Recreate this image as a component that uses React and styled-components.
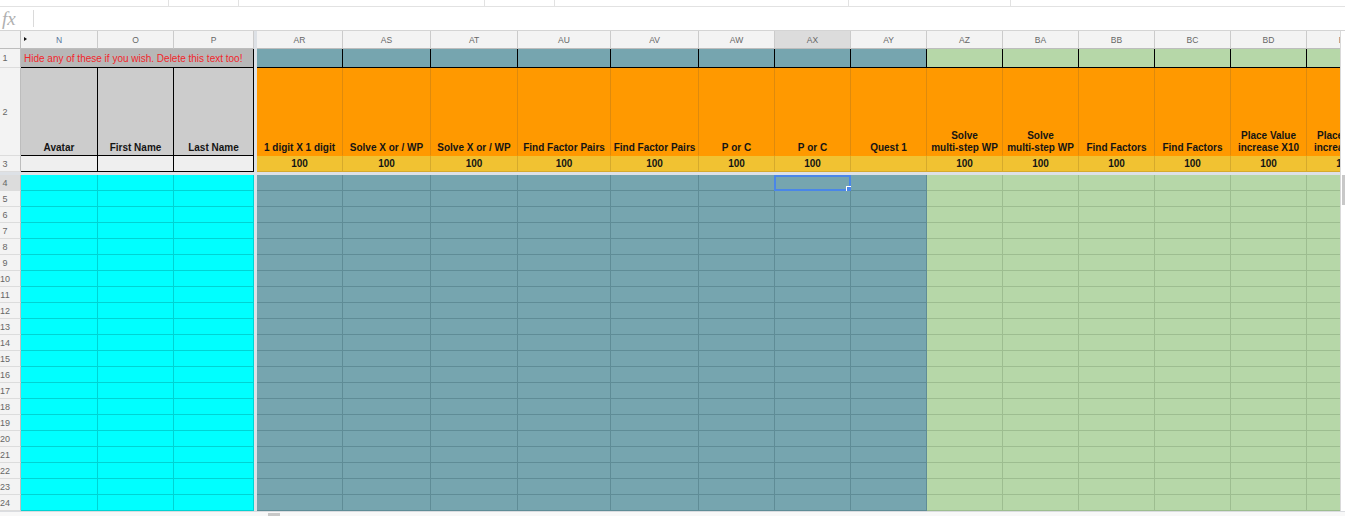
import React from "react";
import styled, { createGlobalStyle } from "styled-components";

const GlobalStyle = createGlobalStyle`
  *, *::before, *::after { box-sizing: border-box; }
  html, body { margin: 0; padding: 0; background: #ffffff; }
  body { font-family: "Liberation Sans", Arial, sans-serif; }
`;

const tones = {
  cyan: { bg: "#00ffff", line: "#00d3d3" },
  teal: { bg: "#76a5af", line: "#5f8c96" },
  green: { bg: "#b6d7a8", line: "#9dbd90" },
};

const leftCols = [
  { col: "N", w: 77, title: "Avatar" },
  { col: "O", w: 76, title: "First Name" },
  { col: "P", w: 80, title: "Last Name" },
];

const topics = [
  { col: "AR", w: 86, tone: "teal", title: ["1 digit X 1 digit"], score: "100" },
  { col: "AS", w: 88, tone: "teal", title: ["Solve X or / WP"], score: "100" },
  { col: "AT", w: 87, tone: "teal", title: ["Solve X or / WP"], score: "100" },
  { col: "AU", w: 93, tone: "teal", title: ["Find Factor Pairs"], score: "100" },
  { col: "AV", w: 88, tone: "teal", title: ["Find Factor Pairs"], score: "100" },
  { col: "AW", w: 76, tone: "teal", title: ["P or C"], score: "100" },
  { col: "AX", w: 76, tone: "teal", title: ["P or C"], score: "100" },
  { col: "AY", w: 76, tone: "teal", title: ["Quest 1"], score: "" },
  { col: "AZ", w: 76, tone: "green", title: ["Solve", "multi-step WP"], score: "100" },
  { col: "BA", w: 76, tone: "green", title: ["Solve", "multi-step WP"], score: "100" },
  { col: "BB", w: 76, tone: "green", title: ["Find Factors"], score: "100" },
  { col: "BC", w: 76, tone: "green", title: ["Find Factors"], score: "100" },
  { col: "BD", w: 76, tone: "green", title: ["Place Value", "increase X10"], score: "100" },
  { col: "BE", w: 76, tone: "green", title: ["Place Value", "increase X10"], score: "100" },
];

const activeCol = "AX";
const activeRow = 4;

const Page = styled.div`
  width: 1345px;
  height: 516px;
  overflow: hidden;
  display: flex;
  flex-direction: column;
`;

const Toolbar = styled.div`
  height: 7px;
  flex-shrink: 0;
  display: flex;
  border-bottom: 1px solid #e2e2e2;
`;

const ToolGroup = styled.div`
  width: ${(p) => p.$w}px;
  flex-shrink: 0;
  border-right: 1px solid #e2e2e2;
`;

const FormulaBar = styled.div`
  height: 24px;
  flex-shrink: 0;
  display: flex;
  align-items: center;
  border-bottom: 1px solid #d4d4d4;
`;

const Fx = styled.span`
  width: 33px;
  padding-left: 2px;
  font-family: "Liberation Serif", "Times New Roman", serif;
  font-style: italic;
  font-size: 19px;
  color: #b0b0b0;
  line-height: 1;
`;

const FormulaDivider = styled.div`
  width: 1px;
  height: 17px;
  background: #dadada;
`;

const Main = styled.div`
  flex: 1;
  display: flex;
  min-height: 0;
`;

const SheetView = styled.div`
  flex: 1;
  min-width: 0;
  overflow: hidden;
`;

const Grid = styled.div`
  display: grid;
  grid-template-columns: ${(p) => p.$cols};
  grid-template-rows: 18px 19px 88px 16px 3px repeat(21, 16px);
`;

const Corner = styled.div`
  background: #f3f3f3;
  border-right: 1px solid #bdbdbd;
  border-bottom: 1px solid #bdbdbd;
`;

const ColHead = styled.div`
  position: relative;
  display: flex;
  align-items: center;
  justify-content: center;
  background: ${(p) => (p.$active ? "#dcdcdc" : "#f3f3f3")};
  border-right: 1px solid #cbcbcb;
  border-bottom: 1px solid #bdbdbd;
  font-size: 8.5px;
  color: ${(p) => (p.$hint ? "#55739b" : "#666666")};
  white-space: nowrap;
`;

const HiddenMark = styled.span`
  position: absolute;
  left: 3px;
  top: 6px;
  width: 0;
  height: 0;
  border-top: 2.5px solid transparent;
  border-bottom: 2.5px solid transparent;
  border-left: 3px solid #111111;
`;

const RowHead = styled.div`
  display: flex;
  align-items: center;
  background: ${(p) => (p.$active ? "#dcdcdc" : "#f3f3f3")};
  border-right: 1px solid #bdbdbd;
  border-bottom: 1px solid #dcdcdc;
  font-size: 9px;
  color: #666666;
`;

const RowNum = styled.span`
  width: 10px;
  text-align: center;
  white-space: nowrap;
`;

const FreezeCol = styled.div`
  background: #dde1e6;
`;

const FreezeRow = styled.div`
  grid-column: 1 / -1;
  background: #dde1e6;
`;

const NoteCell = styled.div`
  grid-column: span 3;
  display: flex;
  align-items: center;
  padding-left: 3px;
  background: #b7b7b7;
  border-right: 1px solid #000000;
  border-bottom: 1px solid #000000;
  color: #f2262b;
  font-size: 10px;
  white-space: nowrap;
  overflow: hidden;
`;

const BandCell = styled.div`
  background: ${(p) => tones[p.$tone].bg};
  border-right: 1px solid #000000;
  border-bottom: 1px solid #000000;
`;

const TitleCell = styled.div`
  display: flex;
  flex-direction: column;
  justify-content: flex-end;
  align-items: center;
  padding-bottom: 1px;
  background: ${(p) => (p.$topic ? "#ff9900" : "#cccccc")};
  border-right: 1px solid ${(p) => (p.$topic ? "#de8a0c" : "#000000")};
  border-bottom: 1px solid ${(p) => (p.$topic ? "#ff9900" : "#000000")};
  font-size: 10px;
  font-weight: bold;
  line-height: 12px;
  color: #141414;
  text-align: center;
  white-space: nowrap;
`;

const ScoreCell = styled.div`
  display: flex;
  align-items: center;
  justify-content: center;
  background: ${(p) => (p.$topic ? "#f1c232" : "#efefef")};
  border-right: 1px solid ${(p) => (p.$topic ? "#d6aa2c" : "#000000")};
  border-bottom: 1px solid ${(p) => (p.$topic ? "#d6aa2c" : "#000000")};
  font-size: 10px;
  font-weight: bold;
  color: #141414;
`;

const DataCell = styled.div`
  position: relative;
  background: ${(p) => tones[p.$tone].bg};
  border-right: 1px solid ${(p) => tones[p.$tone].line};
  border-bottom: 1px solid ${(p) => tones[p.$tone].line};
`;

const Selection = styled.span`
  position: absolute;
  top: 0;
  left: -1px;
  right: -1px;
  bottom: -1px;
  border: 2px solid #4a86e8;
`;

const Handle = styled.span`
  position: absolute;
  right: -4px;
  bottom: -4px;
  width: 7px;
  height: 7px;
  background: #4a86e8;
  border-top: 1px solid #ffffff;
  border-left: 1px solid #ffffff;
`;

const VScroll = styled.div`
  width: 5px;
  flex-shrink: 0;
  padding-top: 144px;
  border-left: 1px solid #d9d9d9;
  background: #ffffff;
`;

const VThumb = styled.div`
  height: 30px;
  margin-left: 1px;
  background: #c8c8c8;
`;

const HScroll = styled.div`
  height: 5px;
  flex-shrink: 0;
  padding-top: 1px;
  border-top: 1px solid #dadce0;
  background: #f8f8f8;
`;

const HThumb = styled.div`
  width: 12px;
  height: 3px;
  margin-left: 268px;
  background: #c8c8c8;
`;

function App() {
  const rowNums = Array.from({ length: 21 }, (_, i) => i + 4);
  const cols = [21, ...leftCols.map((c) => c.w), 3, ...topics.map((t) => t.w)]
    .map((w) => `${w}px`)
    .join(" ");

  return (
    <Page>
      <GlobalStyle />
      <Toolbar>
        {[169, 70, 246, 70, 294, 162].map((w, i) => (
          <ToolGroup key={i} $w={w} />
        ))}
      </Toolbar>
      <FormulaBar>
        <Fx>fx</Fx>
        <FormulaDivider />
      </FormulaBar>
      <Main>
        <SheetView>
          <Grid $cols={cols}>
            <Corner />
            {leftCols.map((c, i) => (
              <ColHead key={c.col} $hint={i === 0}>
                {i === 0 && <HiddenMark />}
                {c.col}
              </ColHead>
            ))}
            <FreezeCol />
            {topics.map((t) => (
              <ColHead key={t.col} $active={t.col === activeCol}>
                {t.col}
              </ColHead>
            ))}

            <RowHead>
              <RowNum>1</RowNum>
            </RowHead>
            <NoteCell>Hide any of these if you wish. Delete this text too!</NoteCell>
            <FreezeCol />
            {topics.map((t) => (
              <BandCell key={t.col} $tone={t.tone} />
            ))}

            <RowHead>
              <RowNum>2</RowNum>
            </RowHead>
            {leftCols.map((c) => (
              <TitleCell key={c.col}>{c.title}</TitleCell>
            ))}
            <FreezeCol />
            {topics.map((t) => (
              <TitleCell key={t.col} $topic>
                {t.title.map((line, i) => (
                  <span key={i}>{line}</span>
                ))}
              </TitleCell>
            ))}

            <RowHead>
              <RowNum>3</RowNum>
            </RowHead>
            {leftCols.map((c) => (
              <ScoreCell key={c.col} />
            ))}
            <FreezeCol />
            {topics.map((t) => (
              <ScoreCell key={t.col} $topic>
                {t.score}
              </ScoreCell>
            ))}

            <FreezeRow />

            {rowNums.map((n) => (
              <React.Fragment key={n}>
                <RowHead $active={n === activeRow}>
                  <RowNum>{n}</RowNum>
                </RowHead>
                {leftCols.map((c) => (
                  <DataCell key={c.col} $tone="cyan" />
                ))}
                <FreezeCol />
                {topics.map((t) => (
                  <DataCell key={t.col} $tone={t.tone}>
                    {n === activeRow && t.col === activeCol && (
                      <Selection>
                        <Handle />
                      </Selection>
                    )}
                  </DataCell>
                ))}
              </React.Fragment>
            ))}
          </Grid>
        </SheetView>
        <VScroll>
          <VThumb />
        </VScroll>
      </Main>
      <HScroll>
        <HThumb />
      </HScroll>
    </Page>
  );
}

export default App;
